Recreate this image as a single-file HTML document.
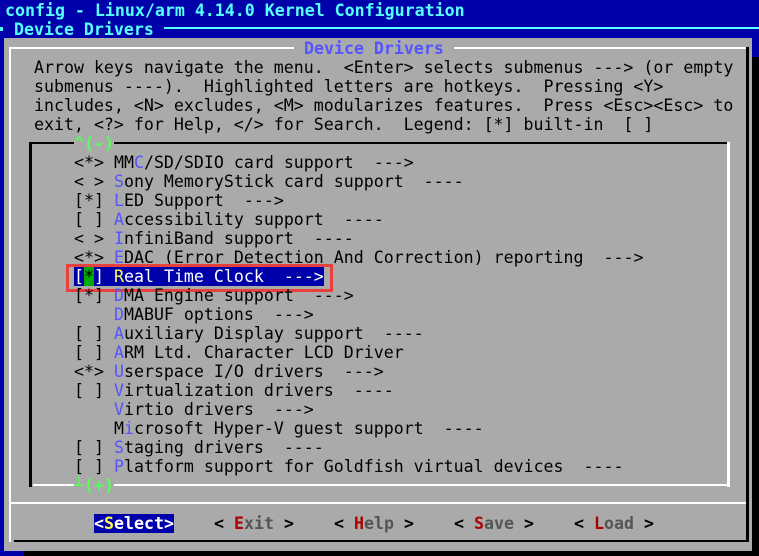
<!DOCTYPE html>
<html><head><meta charset="utf-8"><style>
html,body{margin:0;padding:0}
body{width:759px;height:556px;position:relative;overflow:hidden;background:#000;font-family:"DejaVu Sans Mono","Liberation Mono",monospace;font-size:16.6px;}
.t{position:absolute;white-space:pre;line-height:19px;height:19px;color:#000;margin-top:1px}
.b{font-weight:bold}
.h{color:#5555ff}
.r{color:#aa0000}
.d{color:#555}
.g{color:#55ff55;font-weight:bold}
.ln{position:absolute}
</style></head><body>
<div class="ln" style="left:0;top:0;width:759px;height:57px;background:#0000aa"></div>
<div class="ln" style="left:0;top:0;width:24px;height:556px;background:#0000aa"></div>
<div class="ln" style="left:4px;top:38px;width:748px;height:513px;background:#aaaaaa"></div>
<div class="ln" style="left:164px;top:27px;width:595px;height:2px;background:#55ffff"></div>
<div class="ln" style="left:0;top:27px;width:3px;height:4px;background:#55ffff"></div>
<div class="t b" style="left:5px;top:0;color:#55ffff">config - Linux/arm 4.14.0 Kernel Configuration</div>
<div class="t b" style="left:14px;top:19px;color:#55ffff">Device Drivers</div>
<div class="ln" style="left:9px;top:47px;width:285px;height:2px;background:#fff"></div>
<div class="ln" style="left:454px;top:47px;width:294px;height:2px;background:#fff"></div>
<div class="ln" style="left:9px;top:47px;width:2px;height:495px;background:#fff"></div>
<div class="ln" style="left:746px;top:47px;width:3px;height:495px;background:#000"></div>
<div class="ln" style="left:14px;top:540px;width:735px;height:2px;background:#000"></div>
<div class="ln" style="left:10px;top:502px;width:736px;height:2px;background:#fff"></div>
<div class="t b h" style="left:304px;top:38px">Device Drivers</div>
<div class="t" style="left:34px;top:57px">Arrow keys navigate the menu.  &lt;Enter&gt; selects submenus ---&gt; (or empty</div>
<div class="t" style="left:34px;top:76px">submenus ----).  Highlighted letters are hotkeys.  Pressing &lt;Y&gt;</div>
<div class="t" style="left:34px;top:95px">includes, &lt;N&gt; excludes, &lt;M&gt; modularizes features.  Press &lt;Esc&gt;&lt;Esc&gt; to</div>
<div class="t" style="left:34px;top:114px">exit, &lt;?&gt; for Help, &lt;/&gt; for Search.  Legend: [*] built-in  [ ]</div>
<div class="ln" style="left:29px;top:142px;width:699px;height:2px;background:#000"></div>
<div class="ln" style="left:29px;top:142px;width:3px;height:345px;background:#000"></div>
<div class="ln" style="left:727px;top:142px;width:3px;height:345px;background:#fff"></div>
<div class="ln" style="left:33px;top:484px;width:697px;height:2px;background:#fff"></div>
<div class="t g" style="left:74px;top:133px;background:#aaa">^(-)</div>
<div class="t g" style="left:74px;top:475px;background:#aaa">┴(+)</div>
<div class="t" style="left:74px;top:152px">&lt;*&gt; MM<span class="h">C</span>/SD/SDIO card support  ---&gt;</div>
<div class="t" style="left:74px;top:171px">&lt; &gt; <span class="h">S</span>ony MemoryStick card support  ----</div>
<div class="t" style="left:74px;top:190px">[*] <span class="h">L</span>ED Support  ---&gt;</div>
<div class="t" style="left:74px;top:209px">[ ] <span class="h">A</span>ccessibility support  ----</div>
<div class="t" style="left:74px;top:228px">&lt; &gt; <span class="h">I</span>nfiniBand support  ----</div>
<div class="t" style="left:74px;top:247px">&lt;*&gt; <span class="h">E</span>DAC (Error Detection And Correction) reporting  ---&gt;</div>
<div class="t" style="left:74px;top:266px;background:#0000aa;color:#fff">[<span style="background:#00aa00;color:#000">*</span>] <span style="color:#ffff55">R</span>eal Time Clock  ---&gt;</div>
<div class="ln" style="left:66px;top:264px;width:261px;height:22px;border:3px solid #e8403c"></div>
<div class="t" style="left:74px;top:285px">[*] <span class="h">D</span>MA Engine support  ---&gt;</div>
<div class="t" style="left:74px;top:304px">    <span class="h">D</span>MABUF options  ---&gt;</div>
<div class="t" style="left:74px;top:323px">[ ] <span class="h">A</span>uxiliary Display support  ----</div>
<div class="t" style="left:74px;top:342px">[ ] <span class="h">A</span>RM Ltd. Character LCD Driver</div>
<div class="t" style="left:74px;top:361px">&lt;*&gt; <span class="h">U</span>serspace I/O drivers  ---&gt;</div>
<div class="t" style="left:74px;top:380px">[ ] <span class="h">V</span>irtualization drivers  ----</div>
<div class="t" style="left:74px;top:399px">    <span class="h">V</span>irtio drivers  ---&gt;</div>
<div class="t" style="left:74px;top:418px">    M<span class="h">i</span>crosoft Hyper-V guest support  ----</div>
<div class="t" style="left:74px;top:437px">[ ] <span class="h">S</span>taging drivers  ----</div>
<div class="t" style="left:74px;top:456px">[ ] <span class="h">P</span>latform support for Goldfish virtual devices  ----</div>
<div class="t b" style="left:94px;top:513px;background:#0000aa;color:#fff">&lt;<span style="color:#ffff55">S</span>elect&gt;</div>
<div class="t b" style="left:214px;top:513px">&lt; <span class="r">E</span><span class="d">xit</span> &gt;</div>
<div class="t b" style="left:334px;top:513px">&lt; <span class="r">H</span><span class="d">elp</span> &gt;</div>
<div class="t b" style="left:454px;top:513px">&lt; <span class="r">S</span><span class="d">ave</span> &gt;</div>
<div class="t b" style="left:574px;top:513px">&lt; <span class="r">L</span><span class="d">oad</span> &gt;</div>
</body></html>
